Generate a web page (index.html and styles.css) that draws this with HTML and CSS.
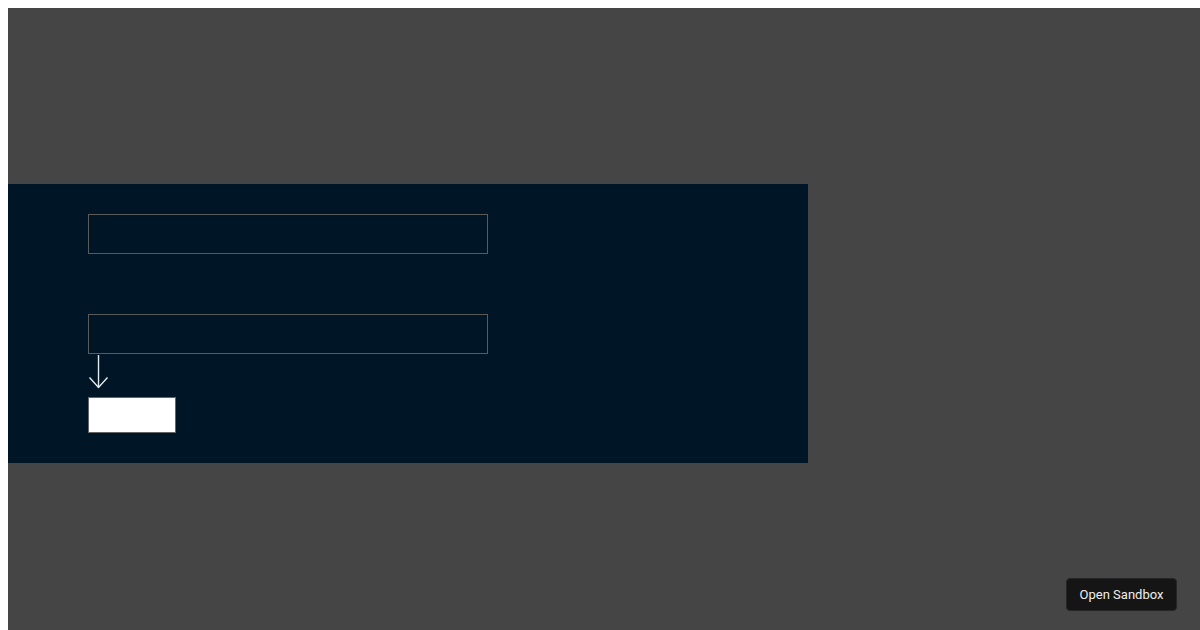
FILE: index.html
```html
<!DOCTYPE html>
<html>
<head>
<meta charset="utf-8">
<link rel="stylesheet" href="styles.css">
</head>
<body>
<div class="page">
  <div class="panel">
    <input class="field" type="text">
    <input class="field second" type="text">
    <div class="arrow">
      <svg width="22" height="35" viewBox="0 0 22 35">
        <line x1="10.5" y1="1" x2="10.5" y2="33" stroke="#e2eaee" stroke-width="1.4"/>
        <polyline points="1.5,23.5 10.5,33.5 19.5,23.5" fill="none" stroke="#e2eaee" stroke-width="1.4"/>
      </svg>
    </div>
    <button class="submit"></button>
  </div>
</div>
<button class="sandbox">Open Sandbox</button>
</body>
</html>
```
FILE: styles.css
```css
html { background: #ffffff; }
body {
  margin: 8px 0 0 8px;
  font-family: "DejaVu Sans", sans-serif;
}
.page {
  background: #454545;
  min-height: 622px;
  padding-top: 176px;
  box-sizing: border-box;
}
.panel {
  width: 800px;
  height: 279px;
  box-sizing: border-box;
  background: #001627;
  padding: 30px 80px;
}
.field {
  display: block;
  width: 400px;
  height: 40px;
  box-sizing: border-box;
  margin: 0;
  border: 1px solid #5a5a5a;
  background: #001525;
  outline: none;
}
.second { margin-top: 60px; }
.arrow {
  height: 43px;
}
.arrow svg {
  display: block;
}
.submit {
  display: block;
  width: 88px;
  height: 36px;
  box-sizing: border-box;
  background: #ffffff;
  border: 1px solid #666;
  margin: 0;
  padding: 0;
}
.sandbox {
  position: fixed;
  right: 23px;
  bottom: 19px;
  width: 111px;
  height: 33px;
  background: #151515;
  color: #eeeeee;
  border: 1px solid #262626;
  border-radius: 4px;
  font-family: Roboto, sans-serif;
  font-size: 13px;
  padding: 0;
}
```
